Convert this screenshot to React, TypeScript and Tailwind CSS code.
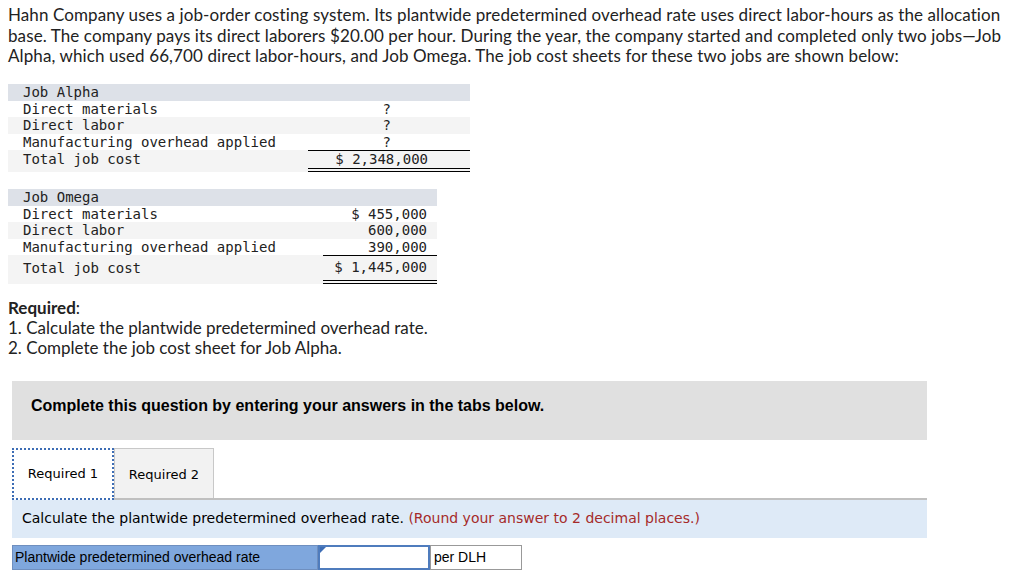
export default function App() {
  const mono = { fontFamily: '"DejaVu Sans Mono", monospace' }
  const body = { fontFamily: 'Lato, sans-serif' }

  return (
    <div className="min-h-[577px] bg-white pl-2 pt-[5px] text-black">
      {/* Problem statement */}
      <p className="w-[1014px] text-[17px] leading-[20.5px] tracking-[0.1px] text-[#222]" style={body}>
        Hahn Company uses a job-order costing system. Its plantwide predetermined overhead rate uses direct labor-hours as the allocation base. The company pays its direct laborers $20.00 per hour. During the year, the company started and completed only two jobs—Job Alpha, which used 66,700 direct labor-hours, and Job Omega. The job cost sheets for these two jobs are shown below:
      </p>

      {/* Job Alpha */}
      <div className="mt-[17px] w-[462px] text-[14px] leading-[16.5px] text-[#222]" style={mono}>
        <div className="h-[17px] bg-[#dde1e8] pl-[15px] leading-[17px]">Job Alpha</div>
        <div className="flex h-[16.5px]">
          <div className="w-[300px] pl-[15px]">Direct materials</div>
          <div className="w-[162px] pr-[79px] text-right">?</div>
        </div>
        <div className="flex h-[16.5px] bg-[#f4f4f4]">
          <div className="w-[300px] pl-[15px]">Direct labor</div>
          <div className="w-[162px] pr-[79px] text-right">?</div>
        </div>
        <div className="flex h-[16.5px]">
          <div className="w-[300px] pl-[15px]">Manufacturing overhead applied</div>
          <div className="w-[162px] pr-[79px] text-right">?</div>
        </div>
        <div className="flex bg-[#f4f4f4]">
          <div className="w-[300px] pl-[15px] pt-px">Total job cost</div>
          <div className="w-[162px] border-t border-b-4 border-double border-black pr-[42px] text-right">
            $ 2,348,000
          </div>
        </div>
      </div>

      {/* Job Omega */}
      <div className="mt-[17px] w-[429px] text-[14px] leading-[16.5px] text-[#222]" style={mono}>
        <div className="h-[17px] bg-[#dde1e8] pl-[15px] leading-[17px]">Job Omega</div>
        <div className="flex h-[16.5px]">
          <div className="w-[315px] pl-[15px]">Direct materials</div>
          <div className="w-[114px] pr-[10px] text-right">$ 455,000</div>
        </div>
        <div className="flex h-[16.5px] bg-[#f4f4f4]">
          <div className="w-[315px] pl-[15px]">Direct labor</div>
          <div className="w-[114px] pr-[10px] text-right">600,000</div>
        </div>
        <div className="flex h-[16.5px]">
          <div className="w-[315px] pl-[15px]">Manufacturing overhead applied</div>
          <div className="w-[114px] pr-[10px] text-right">390,000</div>
        </div>
        <div className="flex bg-[#f4f4f4]">
          <div className="w-[315px] pl-[15px] pt-[5px]">Total job cost</div>
          <div className="w-[114px] border-t border-b-4 border-double border-black pb-[4px] pr-[10px] pt-[3px] text-right">
            $ 1,445,000
          </div>
        </div>
      </div>

      {/* Required */}
      <div className="mt-[14px] text-[17px] leading-[20px] text-[#222]" style={body}>
        <p>
          <span className="font-bold">Required</span>:
        </p>
        <p>1. Calculate the plantwide predetermined overhead rate.</p>
        <p>2. Complete the job cost sheet for Job Alpha.</p>
      </div>

      {/* Answer area */}
      <div className="ml-1 mt-[23px] w-[915px]">
        <div
          className="h-[59px] bg-[#e0e0e0] pl-[19px] pt-[16px] text-[16px] font-bold leading-[18px]"
          style={{ fontFamily: '"Liberation Sans", Arial, sans-serif' }}
        >
          Complete this question by entering your answers in the tabs below.
        </div>

        <div className="mt-2 flex h-[52px] items-end border-b-2 border-[#c0c0c0]" style={{ fontFamily: '"DejaVu Sans", Verdana, sans-serif' }}>
          <div className="relative z-10 -mb-[2px] flex h-[52px] w-[102px] items-center justify-center border-2 border-dotted border-[#3d6db5] bg-white text-[13px]">
            Required 1
          </div>
          <div className="flex h-[50px] w-[100px] items-center justify-center border border-b-0 border-[#c8c8c8] bg-[#f2f2f2] pt-[3px] text-[13px]">
            Required 2
          </div>
        </div>

        <div
          className="flex h-[38px] items-center bg-[#deeaf7] pl-[10px] text-[14px]"
          style={{ fontFamily: '"DejaVu Sans", Verdana, sans-serif' }}
        >
          Calculate the plantwide predetermined overhead rate.&nbsp;
          <span className="text-[#a52a2a]">(Round your answer to 2 decimal places.)</span>
        </div>

        <div className="mt-[7px] flex h-[25px] text-[14px]" style={{ fontFamily: '"Liberation Sans", Arial, sans-serif' }}>
          <div className="flex w-[306px] items-center border border-[#6f8fbf] bg-[#7fa7dd] pl-[2px]">
            Plantwide predetermined overhead rate
          </div>
          <div className="relative w-[112px] border-2 border-[#4f7cbd] bg-white">
            <div className="absolute left-0 top-0 h-0 w-0 border-r-[6px] border-t-[6px] border-r-transparent border-t-[#3d6db5]" />
          </div>
          <div className="flex w-[92px] items-center border border-[#999] bg-white pl-[3px]">per DLH</div>
        </div>
      </div>
    </div>
  )
}
